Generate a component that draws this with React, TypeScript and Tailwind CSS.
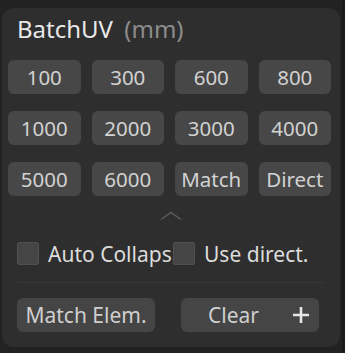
import React from "react";

const FONT = { fontFamily: '"Noto Sans", "Open Sans", sans-serif' };

function Btn({ label }: { label: string }) {
  return (
    <div className="flex h-[34px] items-center justify-center rounded-[6px] bg-[#474747] text-[20.5px] leading-none text-[#d2d2d2]">
      {label}
    </div>
  );
}

function Box() {
  return <div className="h-[23px] w-[22px] shrink-0 rounded-[2px] border border-[#505050] bg-[#454545]" />;
}

export default function App() {
  const labels = ["100", "300", "600", "800", "1000", "2000", "3000", "4000", "5000", "6000", "Match", "Direct"];
  return (
    <div style={FONT} className="flex h-[353px] w-[345px] bg-[#222222]">
      <div className="ml-[2px] mt-[8px] flex h-[339px] w-[338px] flex-col rounded-[12px] bg-[#2e2e2e]">
        <div className="pl-[15px] pt-[5px] text-[24px] leading-[32px] text-[#e8e8e8]">
          BatchUV <span className="ml-[5px] text-[#8c8c8c]">(mm)</span>
        </div>
        <div className="ml-[6px] mt-[15px] grid w-[323px] grid-cols-4 gap-x-[11px] gap-y-[17px]">
          {labels.map((l) => (
            <Btn key={l} label={l} />
          ))}
        </div>
        <div className="ml-[158px] mt-[15px] h-[9px] w-[22px]">
          <svg width="22" height="9" viewBox="0 0 22 9">
            <path d="M1 8.5 L11 1.5 L21 8.5" fill="none" stroke="#5a5a5a" strokeWidth="1.5" />
          </svg>
        </div>
        <div className="ml-[15px] mt-[22px] flex h-[23px] items-center text-[21px] leading-none text-[#dcdcdc]">
          <div className="flex w-[156px] shrink-0 items-center whitespace-nowrap">
            <Box />
            <span className="ml-[9px] mt-[2px]">Auto Collaps</span>
          </div>
          <Box />
          <span className="ml-[9px] mt-[2px] whitespace-nowrap">Use direct.</span>
        </div>
        <div className="ml-[15px] mt-[17px] h-px w-[306px] bg-[#383838]" />
        <div className="ml-[15px] mt-[15px] flex h-[34px] items-stretch gap-[26px] text-[21px] leading-none text-[#cfcfcf]">
          <div className="flex w-[138px] items-center justify-center rounded-[6px] bg-[#454545]">Match Elem.</div>
          <div className="flex w-[138px] items-center justify-between rounded-[6px] bg-[#454545] pl-[27px] pr-[9px]">
            <span>Clear</span>
            <svg width="18" height="18" viewBox="0 0 18 18">
              <path d="M9 1 V17 M1 9 H17" stroke="#e6e6e6" strokeWidth="2.6" />
            </svg>
          </div>
        </div>
      </div>
      <div className="ml-[2px] w-[3px] bg-[#1a1a1a]" />
    </div>
  );
}
